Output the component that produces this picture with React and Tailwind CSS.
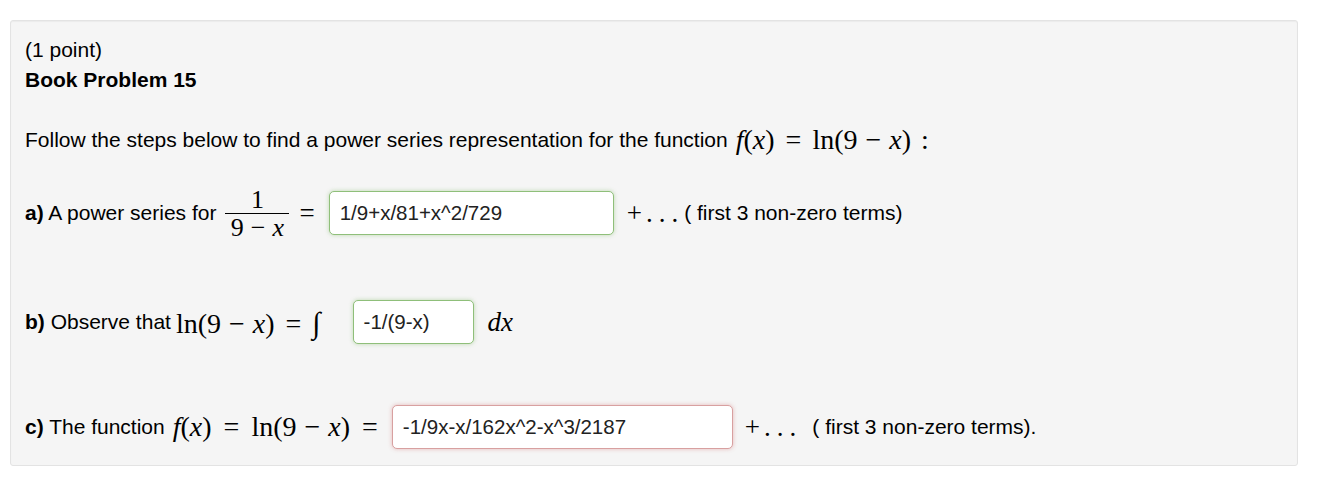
const sans = { fontFamily: '"Liberation Sans", Arial, sans-serif' };

const M = ({ children, className = "" }) => (
  <span className={`font-['Liberation_Serif',serif] ${className}`}>{children}</span>
);
const V = ({ children }) => <span className="italic">{children}</span>;

const Ln9x = () => (
  <>
    ln(9<span className="mx-[8px]">−</span>
    <V>x</V>)
  </>
);

const Fx = () => (
  <>
    <V>f</V>(<V>x</V>)
  </>
);

const Answer = ({ value, width, ok }) => (
  <div
    className={`flex h-[44px] items-center rounded-[5px] border bg-white pl-[10px] text-[20.5px] text-[#222] ${
      ok
        ? "border-[#8fbf7a] shadow-[0_0_4px_rgba(120,180,90,0.45)]"
        : "border-[#d8a0a0] shadow-[0_0_4px_rgba(210,110,110,0.45)]"
    } ${width}`}
  >
    {value}
  </div>
);

const Dots = () => (
  <M className="text-[27px]">
    +<span className="ml-[4px] tracking-[6px]">...</span>
  </M>
);

export default function App() {
  return (
    <div className="min-h-[487px] bg-white pt-[20px] text-black" style={sans}>
      <div className="ml-[10px] h-[446px] w-[1288px] rounded-[3px] border border-[#e3e3e3] bg-[#f5f5f5] px-[14px] pt-[14px] text-[21px] shadow-[inset_0_1px_1px_rgba(0,0,0,0.04)]">
        <div className="leading-[30px]">(1 point)</div>
        <div className="font-bold leading-[30px]">Book Problem 15</div>

        {/* statement */}
        <div className="mt-[30px] flex h-[30px] items-center">
          <span>Follow the steps below to find a power series representation for the function</span>
          <M className="ml-[8px] text-[28px]">
            <Fx />
            <span className="mx-[11px]">=</span>
            <Ln9x />
            <span className="ml-[10px]">:</span>
          </M>
        </div>

        {/* a */}
        <div className="mt-[28px] flex h-[60px] items-center">
          <span>
            <b>a)</b> A power series for
          </span>
          <M className="ml-[9px] inline-flex flex-col items-center text-[26px] leading-[27px]">
            <span>1</span>
            <span className="h-[1px] w-[64px] bg-black" />
            <span>
              9<span className="mx-[7px]">−</span>
              <V>x</V>
            </span>
          </M>
          <M className="ml-[10px] mr-[14px] text-[27px]">=</M>
          <Answer value="1/9+x/81+x^2/729" width="w-[285px]" ok />
          <span className="ml-[13px]">
            <Dots />
          </span>
          <span className="ml-[0px]">( first 3 non-zero terms)</span>
        </div>

        {/* b */}
        <div className="mt-[57px] flex h-[44px] items-center">
          <span>
            <b>b)</b> Observe that
          </span>
          <M className="ml-[5px] text-[28px]">
            <Ln9x />
            <span className="mx-[11px]">=</span>
            <span className="inline-block text-[30px] italic">∫</span>
          </M>
          <span className="ml-[32px]">
            <Answer value="-1/(9-x)" width="w-[121px]" ok />
          </span>
          <M className="ml-[14px] text-[27px] italic">dx</M>
        </div>

        {/* c */}
        <div className="mt-[61px] flex h-[44px] items-center">
          <span>
            <b>c)</b> The function
          </span>
          <M className="ml-[8px] text-[28px]">
            <Fx />
            <span className="mx-[12px]">=</span>
            <Ln9x />
            <span className="ml-[12px] mr-[14px]">=</span>
          </M>
          <Answer value="-1/9x-x/162x^2-x^3/2187" width="w-[341px]" ok={false} />
          <span className="ml-[12px]">
            <Dots />
          </span>
          <span className="ml-[10px]">( first 3 non-zero terms).</span>
        </div>
      </div>
    </div>
  );
}
